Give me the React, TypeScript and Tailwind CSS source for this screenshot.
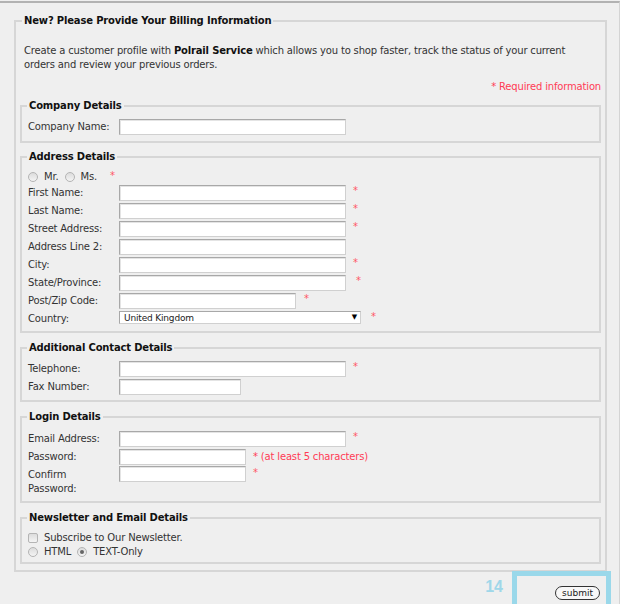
import type { ReactElement, ReactNode } from "react";

function Star({ className = "" }: { className?: string }): ReactElement {
  return <span className={`self-start leading-[14px] text-[#ff5566] ${className}`}>*</span>;
}

function TextBox({ className }: { className: string }): ReactElement {
  return (
    <div
      className={`h-[16px] shrink-0 border border-[#a8a8a8] border-r-[#d0d0d0] border-b-[#d0d0d0] bg-white shadow-[inset_1px_1px_0_#e4e4e4] ${className}`}
    />
  );
}

function Radio({ checked = false }: { checked?: boolean }): ReactElement {
  return (
    <span className="flex h-[10px] w-[10px] shrink-0 items-center justify-center rounded-full border border-[#b4b4b4] bg-gradient-to-b from-[#dcdcdc] to-[#f4f4f4]">
      {checked && <span className="h-[4px] w-[4px] rounded-full bg-[#666]" />}
    </span>
  );
}

function Row({
  label,
  box,
  star,
  note,
}: {
  label: string;
  box: string;
  star?: string;
  note?: ReactNode;
}): ReactElement {
  return (
    <div className="flex h-[18px] items-center">
      <label className="w-[91px] shrink-0">{label}</label>
      <TextBox className={box} />
      {star && <Star className={star} />}
      {note}
    </div>
  );
}

function Group({
  title,
  children,
  className = "",
}: {
  title: string;
  children: ReactNode;
  className?: string;
}): ReactElement {
  return (
    <fieldset className={`border-2 border-[#d6d6d6] px-[6px] ${className}`}>
      <legend className="ml-[-1px] px-[2px] font-bold text-[#111]">{title}</legend>
      {children}
    </fieldset>
  );
}

export default function App(): ReactElement {
  return (
    <div className="h-[604px] w-[620px] overflow-hidden bg-[#efefef] pt-[1px] font-['DejaVu_Sans',Verdana,sans-serif] text-[10px] leading-[14px] tracking-[-0.17px] text-[#333]">
      <div className="h-[620px] border-t-2 border-r border-t-[#b2b2b2] border-r-[#d4d4d4]">
        <fieldset className="ml-[14px] mt-[11px] w-[593px] border-2 border-[#d6d6d6] px-[4px] pb-[6px]">
          <legend className="ml-[2px] px-[2px] font-bold text-[#111]">
            New? Please Provide Your Billing Information
          </legend>

          <p className="mt-[16px] px-[4px]">
            Create a customer profile with <b className="text-[#111]">Polrail Service</b> which allows
            you to shop faster, track the status of your current
            <br />
            orders and review your previous orders.
          </p>
          <p className="mt-[8px] text-right text-[#ff3b55]">* Required information</p>

          <Group title="Company Details" className="mt-[5px] pb-[5px] pt-[5px]">
            <Row label="Company Name:" box="w-[227px]" />
          </Group>

          <Group title="Address Details" className="mt-[7px] pb-[3px] pt-[5px]">
            <div className="flex h-[15px] items-center">
              <Radio />
              <span className="ml-[6px]">Mr.</span>
              <span className="ml-[6px]">
                <Radio />
              </span>
              <span className="ml-[6px]">Ms.</span>
              <Star className="ml-[13px]" />
            </div>
            <Row label="First Name:" box="w-[227px]" star="ml-[7px]" />
            <Row label="Last Name:" box="w-[227px]" star="ml-[7px]" />
            <Row label="Street Address:" box="w-[227px]" star="ml-[7px]" />
            <Row label="Address Line 2:" box="w-[227px]" />
            <Row label="City:" box="w-[227px]" star="ml-[7px]" />
            <Row label="State/Province:" box="w-[227px]" star="ml-[10px]" />
            <Row label="Post/Zip Code:" box="w-[177px]" star="ml-[8px]" />
            <div className="flex h-[18px] items-center">
              <label className="w-[91px] shrink-0">Country:</label>
              <div className="-mt-[3px] flex h-[13px] w-[242px] items-center justify-between border border-[#a8a8a8] border-r-[#d0d0d0] border-b-[#d0d0d0] bg-white pl-[4px] pr-[3px] text-[9px] text-[#222]">
                <span>United Kingdom</span>
                <span className="text-[7px] leading-none text-black">▼</span>
              </div>
              <Star className="ml-[10px]" />
            </div>
          </Group>

          <Group title="Additional Contact Details" className="mt-[8px] pb-[4px] pt-[5px]">
            <Row label="Telephone:" box="w-[227px]" star="ml-[7px]" />
            <Row label="Fax Number:" box="w-[122px]" />
          </Group>

          <Group title="Login Details" className="mt-[8px] pb-[5px] pt-[6px]">
            <Row label="Email Address:" box="w-[227px]" star="ml-[7px]" />
            <Row
              label="Password:"
              box="w-[127px]"
              note={<span className="ml-[7px] text-[#ff3b55]">* (at least 5 characters)</span>}
            />
            <div className="flex items-start">
              <label className="w-[91px] shrink-0 pt-[2px]">
                Confirm
                <br />
                Password:
              </label>
              <TextBox className="w-[127px]" />
              <Star className="ml-[7px]" />
            </div>
          </Group>

          <Group title="Newsletter and Email Details" className="mt-[8px] pb-[3px] pt-[6px]">
            <div className="flex h-[14px] items-center">
              <span className="h-[10px] w-[10px] shrink-0 rounded-[2px] border border-[#b4b4b4] bg-gradient-to-b from-[#dcdcdc] to-[#f4f4f4]" />
              <span className="ml-[6px]">Subscribe to Our Newsletter.</span>
            </div>
            <div className="flex h-[14px] items-center">
              <Radio />
              <span className="ml-[6px]">HTML</span>
              <span className="ml-[6px]">
                <Radio checked />
              </span>
              <span className="ml-[6px]">TEXT-Only</span>
            </div>
          </Group>
        </fieldset>

        <div className="-mt-[1px] flex items-start justify-end pr-[8px]">
          <span className="mr-[9px] mt-[7px] font-['Liberation_Sans',Arial,sans-serif] text-[16px] font-bold leading-[18px] tracking-normal text-[#9fd7e9]">
            14
          </span>
          <div className="flex h-[40px] w-[99px] items-start justify-end border-[5px] border-[#9ad8ea] pr-[6px] pt-[10px]">
            <button
              type="button"
              className="rounded-full border border-[#333] bg-[#f8f8f8] px-[6px] text-[9px] leading-[12px] tracking-normal text-[#222]"
            >
              submit
            </button>
          </div>
        </div>
      </div>
    </div>
  );
}
